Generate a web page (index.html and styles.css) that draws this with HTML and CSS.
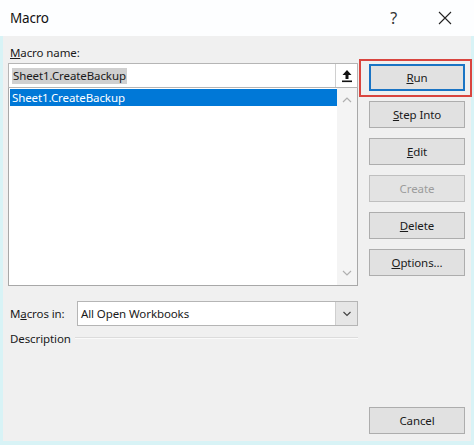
FILE: index.html
```html
<!DOCTYPE html>
<html>
<head>
<meta charset="utf-8">
<link rel="stylesheet" href="styles.css">
</head>
<body>
<div class="window">
  <div class="titlebar">
    <span class="title">Macro</span>
    <span class="help">?</span>
    <span class="close">
      <svg width="14" height="14" viewBox="0 0 14 14"><path d="M1 1L13 13M13 1L1 13" stroke="#222" stroke-width="1.1" fill="none"/></svg>
    </span>
  </div>
  <div class="main">
    <div class="left">
      <div class="label"><u>M</u>acro name:</div>
      <div class="namebox">
        <span class="seltext">Sheet1.CreateBackup</span>
        <span class="upbtn">
          <svg width="12" height="14" viewBox="0 0 12 14"><path d="M6 1L1.5 6H4.5V10H7.5V6H10.5Z" fill="#111"/><rect x="1" y="11.5" width="10" height="1.6" fill="#111"/></svg>
        </span>
      </div>
      <div class="listbox">
        <div class="items">
          <div class="item selected">Sheet1.CreateBackup</div>
        </div>
        <div class="scroll">
          <svg width="10" height="6" viewBox="0 0 10 6"><path d="M1 5L5 1L9 5" stroke="#b0b0b0" stroke-width="1.2" fill="none"/></svg>
          <svg width="10" height="6" viewBox="0 0 10 6"><path d="M1 1L5 5L9 1" stroke="#b0b0b0" stroke-width="1.2" fill="none"/></svg>
        </div>
      </div>
      <div class="inrow">
        <span class="inlabel">M<u>a</u>cros in:</span>
        <div class="combo">
          <span class="combotext">All Open Workbooks</span>
          <span class="combobtn">
            <svg width="10" height="6" viewBox="0 0 10 6"><path d="M1.5 1L5 4.5L8.5 1" stroke="#444" stroke-width="1.2" fill="none"/></svg>
          </span>
        </div>
      </div>
      <div class="descrow">
        <span class="desclabel">Description</span>
        <span class="groove"></span>
      </div>
    </div>
    <div class="right">
      <div class="runwrap">
        <button class="btn default"><u>R</u>un</button>
        <div class="highlight"></div>
      </div>
      <button class="btn"><u>S</u>tep Into</button>
      <button class="btn"><u>E</u>dit</button>
      <button class="btn disabled">Create</button>
      <button class="btn"><u>D</u>elete</button>
      <button class="btn"><u>O</u>ptions...</button>
      <button class="btn cancel">Cancel</button>
    </div>
  </div>
</div>
</body>
</html>
```
FILE: styles.css
```css
html, body {
  margin: 0;
  padding: 0;
  background: #d8f3f6;
}
.window {
  width: 474px;
  height: 445px;
  box-sizing: border-box;
  border-left: 3px solid #d8f3f6;
  border-right: 3px solid #d8f3f6;
  border-bottom: 4px solid #d8f3f6;
  background: #f0f0f0;
  display: flex;
  flex-direction: column;
  font-family: "Noto Sans", "Open Sans", sans-serif;
  font-size: 11.5px;
  letter-spacing: -0.1px;
  color: #1a1a1a;
}
.titlebar {
  height: 36px;
  background: #fdfeff;
  display: flex;
  align-items: center;
  flex-shrink: 0;
  margin-left: -3px;
  margin-right: -3px;
}
.title {
  font-size: 13.5px;
  letter-spacing: -0.2px;
  margin-left: 10px;
  flex: 1;
  color: #111;
}
.help {
  font-size: 16px;
  color: #333;
  margin-right: 41px;
}
.close {
  display: flex;
  margin-right: 22px;
}
.main {
  flex: 1;
  display: flex;
  padding: 7px 6px 7px 5px;
}
.left {
  width: 350px;
  display: flex;
  flex-direction: column;
}
.label {
  height: 20px;
  line-height: 20px;
  padding-left: 2px;
}
.namebox {
  height: 25px;
  box-sizing: border-box;
  border: 1px solid #b5b5b5;
  background: #fff;
  display: flex;
  align-items: center;
  padding-left: 3px;
  position: relative;
  z-index: 1;
}
.seltext {
  background: #d0d0d0;
  line-height: 16px;
  padding: 0 1px;
  flex: none;
  margin-right: auto;
}
.upbtn {
  width: 21px;
  height: 23px;
  border-left: 1px solid #d0d0d0;
  display: flex;
  align-items: center;
  justify-content: center;
}
.listbox {
  height: 199px;
  margin-top: -1px;
  box-sizing: border-box;
  border: 1px solid #a8a8a8;
  background: #fff;
  display: flex;
}
.items {
  flex: 1;
  padding: 1px 0 0 1px;
}
.item {
  height: 17px;
  line-height: 17px;
  padding-left: 2px;
}
.item.selected {
  background: #0078d7;
  color: #fff;
}
.scroll {
  width: 20px;
  background: #f4f4f4;
  display: flex;
  flex-direction: column;
  justify-content: space-between;
  align-items: center;
  padding: 9px 0 9px;
}
.inrow {
  margin-top: 15px;
  height: 25px;
  display: flex;
  align-items: center;
}
.inlabel {
  width: 67px;
  padding-left: 2px;
}
.combo {
  flex: 1;
  height: 25px;
  box-sizing: border-box;
  border: 1px solid #b5b5b5;
  background: #fff;
  display: flex;
  align-items: center;
}
.combotext {
  flex: 1;
  padding-left: 3px;
}
.combobtn {
  width: 21px;
  height: 23px;
  background: #e6e6e6;
  border-left: 1px solid #cfcfcf;
  display: flex;
  align-items: center;
  justify-content: center;
}
.descrow {
  margin-top: 3px;
  height: 18px;
  display: flex;
  align-items: center;
}
.desclabel {
  padding-left: 2px;
  padding-right: 4px;
}
.groove {
  flex: 1;
  height: 1px;
  background: #dcdcdc;
  border-bottom: 1px solid #fafafa;
}
.right {
  width: 96px;
  margin-left: 11px;
  display: flex;
  flex-direction: column;
  gap: 10px;
  padding-top: 21px;
}
.runwrap {
  position: relative;
}
.btn {
  display: block;
  width: 96px;
  height: 27px;
  box-sizing: border-box;
  border: 1px solid #adadad;
  background: #e1e1e1;
  font-family: "Noto Sans", "Open Sans", sans-serif;
  font-size: 11.5px;
  letter-spacing: -0.1px;
  color: #1a1a1a;
  padding: 0;
  margin: 0;
}
.btn.default {
  border: 2px solid #1a74c4;
}
.btn.disabled {
  color: #9c9c9c;
  border-color: #bfbfbf;
  background: #e3e3e3;
}
.btn.cancel {
  margin-top: auto;
}
.highlight {
  position: absolute;
  left: -10px;
  top: -5px;
  right: -7px;
  bottom: -6px;
  border: 2px solid #d9453f;
}
```
